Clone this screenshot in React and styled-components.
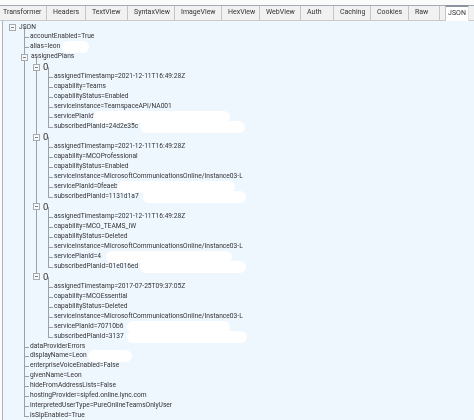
import React from 'react';
import styled, { createGlobalStyle } from 'styled-components';

const tabs = [
	['Transformer', 47],
	['Headers', 39],
	['TextView', 42],
	['SyntaxView', 47],
	['ImageView', 47],
	['HexView', 38],
	['WebView', 41],
	['Auth', 33],
	['Caching', 37],
	['Cookies', 38],
	['Raw', 31],
];

// hide = [left, width] of the white patch, measured from the row's own left edge
const plans = [
	[
		['assignedTimestamp=2021-12-11T16:49:28Z'],
		['capability=Teams'],
		['capabilityStatus=Enabled'],
		['serviceInstance=TeamspaceAPI/NA001'],
		['servicePlanId', [48, 137]],
		['subscribedPlanId=24d2e35c', [95, 105]],
	],
	[
		['assignedTimestamp=2021-12-11T16:49:28Z'],
		['capability=MCOProfessional'],
		['capabilityStatus=Enabled'],
		['serviceInstance=MicrosoftCommunicationsOnline/Instance03-L'],
		['servicePlanId=0feaeb', [72, 118]],
		['subscribedPlanId=1131d1a7', [98, 103]],
	],
	[
		['assignedTimestamp=2021-12-11T16:49:28Z'],
		['capability=MCO_TEAMS_IW'],
		['capabilityStatus=Deleted'],
		['serviceInstance=MicrosoftCommunicationsOnline/Instance03-L'],
		['servicePlanId=4', [61, 126]],
		['subscribedPlanId=01e016ed', [95, 106]],
	],
	[
		['assignedTimestamp=2017-07-25T09:37:05Z'],
		['capability=MCOEssential'],
		['capabilityStatus=Deleted'],
		['serviceInstance=MicrosoftCommunicationsOnline/Instance03-L'],
		['servicePlanId=70710b6', [82, 103]],
		['subscribedPlanId=3137', [82, 120]],
	],
];

const after = [
	['dataProviderErrors'],
	['displayName=Leon', [67, 44]],
	['enterpriseVoiceEnabled=False'],
	['givenName=Leon'],
	['hideFromAddressLists=False'],
	['hostingProvider=sipfed.online.lync.com'],
	['interpretedUserType=PureOnlineTeamsOnlyUser'],
	['isSipEnabled=True'],
];

const Leaf = ({ text, hide }) => (
	<Row>
		{text}
		{hide && <Redact $left={hide[0]} $width={hide[1]} />}
	</Row>
);

const Group = ({ label, big, children }) => (
	<>
		<Node>
			<Toggle />
			<NodeLabel $big={big}>{label}</NodeLabel>
		</Node>
		{children}
	</>
);

const App = () => (
	<Page>
		<GlobalStyle />
		<TabBar>
			{tabs.map(([label, width]) => (
				<Tab key={label} $width={width}>{label}</Tab>
			))}
			<ActiveTab>JSON</ActiveTab>
		</TabBar>
		<TreePane>
			<Group label="JSON">
				<Children>
					<Leaf text="accountEnabled=True" />
					<Leaf text="alias=leon" hide={[41, 27]} />
					<Group label="assignedPlans">
						<Children $stop={65}>
							{plans.map((plan, i) => (
								<Group key={i} label="0" big>
									<Children>
										{plan.map(([text, hide]) => (
											<Leaf key={text} text={text} hide={hide} />
										))}
									</Children>
								</Group>
							))}
						</Children>
					</Group>
					{after.map(([text, hide]) => (
						<Leaf key={text} text={text} hide={hide} />
					))}
				</Children>
			</Group>
		</TreePane>
	</Page>
);

const GlobalStyle = createGlobalStyle`
	html, body {
		margin: 0;
		padding: 0;
		background: #ffffff;
	}
`;

const Page = styled.div`
	width: 474px;
	height: 420px;
	overflow: hidden;
	padding-top: 5px;
	box-sizing: border-box;
	background: #fbfbfb;
	font-family: Roboto, 'Liberation Sans', sans-serif;
	font-size: 6.65px;
	color: #333333;
	filter: blur(0.3px);
`;

const TabBar = styled.div`
	display: flex;
	height: 16px;
	box-sizing: border-box;
	font-size: 7px;
	background: #f1f1f1;
	border-top: 1px solid #a3a9b3;
	border-bottom: 1px solid #c9c9c9;
`;

const Tab = styled.div`
	width: ${(p) => p.$width}px;
	flex-shrink: 0;
	box-sizing: border-box;
	padding-left: 6px;
	line-height: 13px;
	white-space: nowrap;
	border-right: 1px solid #c6c6c6;

	&:first-child {
		padding-left: 3px;
	}
`;

const ActiveTab = styled.div`
	width: 24px;
	margin: -1px 0 -1px 5px;
	box-sizing: border-box;
	text-align: center;
	line-height: 13px;
	background: #ffffff;
	border-top: 2px solid #8d939e;
	border-left: 1px solid #c6c6c6;
	border-right: 1px solid #e2e2e2;
`;

const TreePane = styled.div`
	height: 399px;
	margin-left: 2px;
	padding: 1.5px 0 0 6px;
	background: #eef6fe;
	border-left: 1px solid #aab2bc;
	overflow: hidden;
`;

const Node = styled.div`
	display: flex;
	align-items: center;
	height: 9.97px;
	position: relative;
	z-index: 1;
`;

const Toggle = styled.span`
	width: 7px;
	height: 7px;
	box-sizing: border-box;
	flex-shrink: 0;
	border: 1px solid #a6abb0;
	background: linear-gradient(#7f7f7f, #7f7f7f) center / 3px 1px no-repeat, #f6f8fa;
`;

const NodeLabel = styled.span`
	margin-left: 3px;
	font-size: ${(p) => (p.$big ? '9.5px' : 'inherit')};
	line-height: 9.97px;
`;

const Children = styled.div`
	position: relative;
	margin-left: 12px;

	&::before {
		content: '';
		position: absolute;
		left: 3px;
		top: -5px;
		bottom: ${(p) => p.$stop || 5}px;
		border-left: 1px solid #9aa1a8;
	}
`;

const Row = styled.div`
	position: relative;
	height: 9.97px;
	line-height: 9.97px;
	padding-left: 9px;
	white-space: nowrap;

	&::before {
		content: '';
		position: absolute;
		left: 3px;
		top: 5px;
		width: 5px;
		border-top: 1px solid #9aa1a8;
	}
`;

const Redact = styled.span`
	position: absolute;
	z-index: 2;
	top: -1px;
	left: ${(p) => p.$left}px;
	width: ${(p) => p.$width}px;
	height: 12px;
	background: #ffffff;
	border-radius: 6px;
`;

export default App;
